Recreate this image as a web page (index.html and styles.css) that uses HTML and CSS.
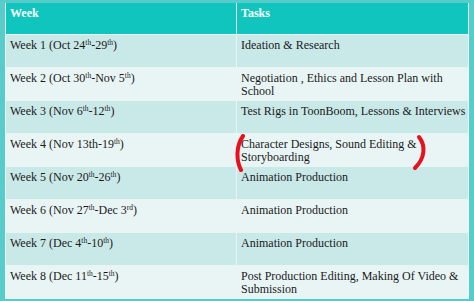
FILE: index.html
```html
<!DOCTYPE html>
<html>
<head>
<meta charset="utf-8">
<link rel="stylesheet" href="styles.css">
</head>
<body>
<div class="frame">
  <table class="plan">
    <thead>
      <tr><th class="c1">Week</th><th>Tasks</th></tr>
    </thead>
    <tbody>
      <tr class="odd"><td class="c1">Week 1 (Oct 24<sup>th</sup>-29<sup>th</sup>)</td><td>Ideation &amp; Research</td></tr>
      <tr class="even"><td class="c1">Week 2 (Oct 30<sup>th</sup>-Nov 5<sup>th</sup>)</td><td>Negotiation , Ethics and Lesson Plan with<br>School</td></tr>
      <tr class="odd"><td class="c1">Week 3 (Nov 6<sup>th</sup>-12<sup>th</sup>)</td><td>Test Rigs in ToonBoom, Lessons &amp; Interviews</td></tr>
      <tr class="even"><td class="c1">Week 4 (Nov 13th-19<sup>th</sup>)</td><td class="marked">Character Designs, Sound Editing &amp;<br>Storyboarding<svg class="parens" width="200" height="40" viewBox="0 0 200 40"><path d="M8 2 C1 12 1 26 6 36" fill="none" stroke="#e8101c" stroke-width="4" stroke-linecap="round"/><path d="M184 3 C191 12 190 24 180 34" fill="none" stroke="#e8101c" stroke-width="4" stroke-linecap="round"/></svg></td></tr>
      <tr class="odd"><td class="c1">Week 5 (Nov 20<sup>th</sup>-26<sup>th</sup>)</td><td>Animation Production</td></tr>
      <tr class="even"><td class="c1">Week 6 (Nov 27<sup>th</sup>-Dec 3<sup>rd</sup>)</td><td>Animation Production</td></tr>
      <tr class="odd"><td class="c1">Week 7 (Dec 4<sup>th</sup>-10<sup>th</sup>)</td><td>Animation Production</td></tr>
      <tr class="even"><td class="c1">Week 8 (Dec 11<sup>th</sup>-15<sup>th</sup>)</td><td>Post Production Editing, Making Of Video &amp;<br>Submission</td></tr>
    </tbody>
  </table>
</div>
</body>
</html>
```
FILE: styles.css
```css
html, body {
  margin: 0;
  padding: 0;
}
body {
  width: 474px;
  height: 301px;
  overflow: hidden;
  background: #57cccb;
  font-family: "Liberation Serif", "DejaVu Serif", serif;
}
.frame {
  padding: 3px 5px 0 5px;
}
.plan {
  width: 464px;
  border-collapse: collapse;
  table-layout: fixed;
}
.plan th, .plan td {
  border: 1px solid #e6f6f5;
  text-align: left;
  vertical-align: top;
  padding: 4px 0 0 4px;
  font-size: 12px;
  line-height: 12.5px;
  color: #1a1a1a;
  white-space: nowrap;
}
.plan th {
  background: #10c5bd;
  color: #ffffff;
  font-weight: bold;
  height: 27px;
  border-top: none;
}
.plan td {
  height: 28px;
}
.plan .c1 {
  width: 226px;
}
.odd td {
  background: #c9e8e8;
}
.even td {
  background: #e9f5f5;
}
sup {
  font-size: 7.5px;
  line-height: 0;
  vertical-align: 4px;
}
.marked {
  position: relative;
}
.parens {
  position: absolute;
  left: -2px;
  top: 0px;
}
```
